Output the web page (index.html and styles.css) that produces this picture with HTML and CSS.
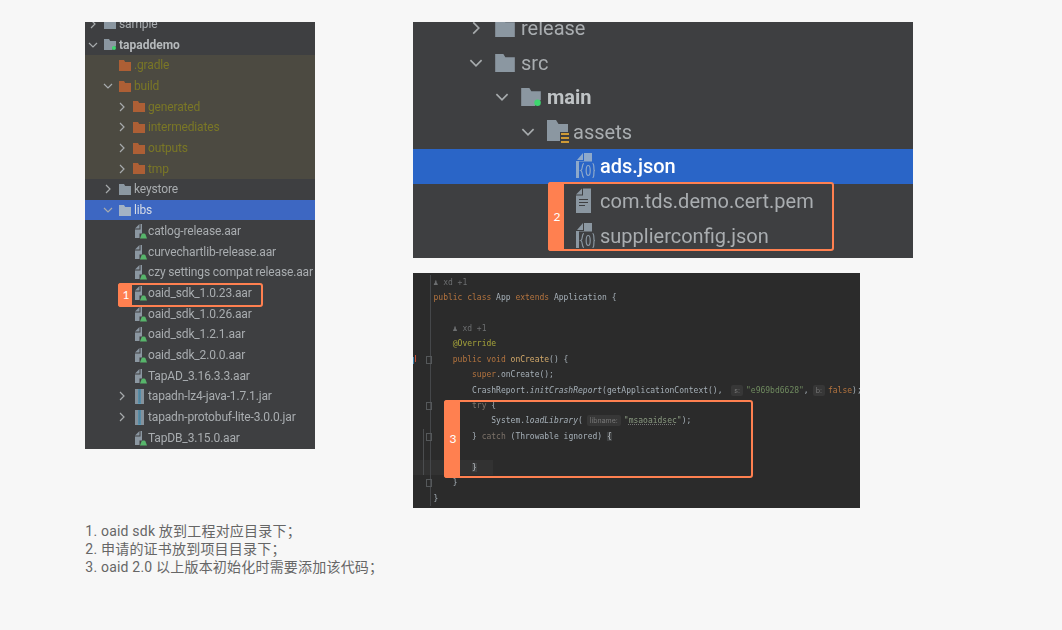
FILE: index.html
```html
<!DOCTYPE html>
<html lang="zh">
<head>
<meta charset="utf-8">
<title>oaid sdk</title>
<link rel="stylesheet" href="styles.css">
</head>
<body>
<svg class="defs" width="0" height="0" aria-hidden="true">
  <symbol id="chev-r" viewBox="0 0 10 10"><path d="M3 1l4 4-4 4" fill="none" stroke="currentColor" stroke-width="1.2"/></symbol>
  <symbol id="chev-d" viewBox="0 0 10 10"><path d="M1 3l4 4 4-4" fill="none" stroke="currentColor" stroke-width="1.2"/></symbol>
  <symbol id="folder" viewBox="0 0 12 11"><path d="M0 0h5l1.2 2H12v9H0z" fill="currentColor"/></symbol>
  <symbol id="module" viewBox="0 0 12 11"><path d="M0 0h5l1.2 2H12v5.5a3 3 0 0 0-3.5 3.5H0z" fill="#8b97a1"/><circle cx="10" cy="9" r="2" fill="#3ed66e"/></symbol>
  <symbol id="assets" viewBox="0 0 22 24"><path d="M0 0h9l2.5 4H21v8H13v9H0z" fill="#8b97a1"/><path d="M14 13h8v2h-8zM14 17h8v2h-8zM14 21h8v2h-8z" fill="#cf9a35"/></symbol>
  <symbol id="aar" viewBox="0 0 12 16"><path d="M0 5.500L4.500 1v4.500z" fill="#8b97a1"/><path d="M0 6.500h5.500V1H7v9.500H4.500V15H0z" fill="#8b97a1"/><path d="M5 15.500l1.500-4 1-1h2l1 1 1.500 4z" fill="#57b56b"/></symbol>
  <symbol id="jar" viewBox="0 0 9 15"><path d="M0 0h9v15H0z" fill="#85929c"/><path d="M3 0h3v15H3z" fill="#5b9ab8"/><path d="M3.500 1h2M3.500 3h2M3.500 5h2M3.500 7h2M3.500 9h2M3.500 11h2M3.500 13h2" stroke="#3e3f41" stroke-width=".5"/></symbol>
  <symbol id="json" viewBox="0 0 19 26"><path d="M1 7l6-7v7z" fill="currentColor"/><path d="M0 8h8V0h8v8.500H3v16.500H0z" fill="currentColor"/><path d="M8 10.500c-2.500 0-.8 6-3.200 7 2.400 1 .7 7 3.200 7M16.500 10.500c2.200 0 .8 6 1.800 7-1 1 .4 7-1.800 7" fill="none" stroke="currentColor" stroke-width="1.200"/><ellipse cx="12.200" cy="17.500" rx="2" ry="5" fill="none" stroke="currentColor" stroke-width="1.200"/></symbol>
  <symbol id="doc" viewBox="0 0 15 25"><path d="M0 6.500L6 .5v6z" fill="#8b97a1"/><path d="M0 7.500h7V.5h8V25H0z" fill="#8b97a1"/><path d="M3 11.500h9M3 14.500h9M3 17.500h6" stroke="#3e3f41" stroke-width="1.200"/></symbol>
</svg>

<main class="page">
  <div class="shots">
    <section class="shot tree-small">
      <div class="rows">
        <div class="row"><svg class="chev"><use href="#chev-r"/></svg><svg class="ico"><use href="#folder"/></svg><span>sample</span></div>
        <div class="row bold"><svg class="chev"><use href="#chev-d"/></svg><svg class="ico"><use href="#module"/></svg><span>tapaddemo</span></div>
        <div class="excluded">
          <div class="row l1"><i class="chev"></i><svg class="ico"><use href="#folder"/></svg><span>.gradle</span></div>
          <div class="row l1"><svg class="chev"><use href="#chev-d"/></svg><svg class="ico"><use href="#folder"/></svg><span>build</span></div>
          <div class="row l2"><svg class="chev"><use href="#chev-r"/></svg><svg class="ico"><use href="#folder"/></svg><span>generated</span></div>
          <div class="row l2"><svg class="chev"><use href="#chev-r"/></svg><svg class="ico"><use href="#folder"/></svg><span>intermediates</span></div>
          <div class="row l2"><svg class="chev"><use href="#chev-r"/></svg><svg class="ico"><use href="#folder"/></svg><span>outputs</span></div>
          <div class="row l2"><svg class="chev"><use href="#chev-r"/></svg><svg class="ico"><use href="#folder"/></svg><span>tmp</span></div>
        </div>
        <div class="row l1"><svg class="chev"><use href="#chev-r"/></svg><svg class="ico"><use href="#folder"/></svg><span>keystore</span></div>
        <div class="row l1 selected"><svg class="chev"><use href="#chev-d"/></svg><svg class="ico"><use href="#folder"/></svg><span>libs</span></div>
        <div class="row l2"><i class="chev"></i><svg class="ico aar"><use href="#aar"/></svg><span>catlog-release.aar</span></div>
        <div class="row l2"><i class="chev"></i><svg class="ico aar"><use href="#aar"/></svg><span>curvechartlib-release.aar</span></div>
        <div class="row l2"><i class="chev"></i><svg class="ico aar"><use href="#aar"/></svg><span>czy settings compat release.aar</span></div>
        <div class="row l2"><i class="chev"></i><svg class="ico aar"><use href="#aar"/></svg><span>oaid_sdk_1.0.23.aar</span></div>
        <div class="row l2"><i class="chev"></i><svg class="ico aar"><use href="#aar"/></svg><span>oaid_sdk_1.0.26.aar</span></div>
        <div class="row l2"><i class="chev"></i><svg class="ico aar"><use href="#aar"/></svg><span>oaid_sdk_1.2.1.aar</span></div>
        <div class="row l2"><i class="chev"></i><svg class="ico aar"><use href="#aar"/></svg><span>oaid_sdk_2.0.0.aar</span></div>
        <div class="row l2"><i class="chev"></i><svg class="ico aar"><use href="#aar"/></svg><span>TapAD_3.16.3.3.aar</span></div>
        <div class="row l2"><svg class="chev"><use href="#chev-r"/></svg><svg class="ico jar"><use href="#jar"/></svg><span>tapadn-lz4-java-1.7.1.jar</span></div>
        <div class="row l2"><svg class="chev"><use href="#chev-r"/></svg><svg class="ico jar"><use href="#jar"/></svg><span>tapadn-protobuf-lite-3.0.0.jar</span></div>
        <div class="row l2"><i class="chev"></i><svg class="ico aar"><use href="#aar"/></svg><span>TapDB_3.15.0.aar</span></div>
      </div>
      <div class="callout c1"><b>1</b></div>
    </section>

    <div class="right">
      <section class="shot tree-large">
        <div class="rows">
          <div class="row"><svg class="chev"><use href="#chev-r"/></svg><svg class="ico"><use href="#folder"/></svg><span>release</span></div>
          <div class="row"><svg class="chev"><use href="#chev-d"/></svg><svg class="ico"><use href="#folder"/></svg><span>src</span></div>
          <div class="row l1 bold"><svg class="chev"><use href="#chev-d"/></svg><svg class="ico"><use href="#module"/></svg><span>main</span></div>
          <div class="row l2"><svg class="chev"><use href="#chev-d"/></svg><svg class="ico tall"><use href="#assets"/></svg><span>assets</span></div>
          <div class="row l3 selected"><i class="chev"></i><svg class="ico file"><use href="#json"/></svg><span>ads.json</span></div>
          <div class="row l3"><i class="chev"></i><svg class="ico file doc"><use href="#doc"/></svg><span>com.tds.demo.cert.pem</span></div>
          <div class="row l3"><i class="chev"></i><svg class="ico file"><use href="#json"/></svg><span>supplierconfig.json</span></div>
        </div>
        <div class="callout c2"><b>2</b></div>
      </section>

      <section class="shot code">
        <div class="lines">
          <div class="ln"><i class="gut"></i><code class="hint">♟ xd +1</code></div>
          <div class="ln"><i class="gut"></i><code><em>public class</em> App <em>extends</em> Application {</code></div>
          <div class="ln"><i class="gut"></i><code></code></div>
          <div class="ln"><i class="gut"></i><code class="hint">    ♟ xd +1</code></div>
          <div class="ln"><i class="gut"></i><code>    <u>@Override</u></code></div>
          <div class="ln"><i class="gut"><s></s><q></q></i><code>    <em>public void</em> <strong>onCreate</strong>() {</code></div>
          <div class="ln"><i class="gut"></i><code>        <em>super</em>.onCreate();</code></div>
          <div class="ln"><i class="gut"></i><code>        CrashReport.<dfn>initCrashReport</dfn>(getApplicationContext(), <small>s:</small><ins>"e969bd6628"</ins>,<small>b:</small><em>false</em>);</code></div>
          <div class="ln"><i class="gut"><q></q></i><code>        <em class="dim">try</em> {</code></div>
          <div class="ln"><i class="gut"></i><code>            System.<dfn>loadLibrary</dfn>(<small>libname:</small><ins class="grey">"<span class="wavy">msaoaidsec</span>"</ins>);</code></div>
          <div class="ln"><i class="gut change"><q></q></i><code>        } <em class="dim">catch</em> (Throwable ignored) <mark>{</mark></code></div>
          <div class="ln"><i class="gut change"></i><code></code></div>
          <div class="ln current"><i class="gut change"></i><code>        <mark>}</mark></code></div>
          <div class="ln"><i class="gut"><q></q></i><code>    }</code></div>
          <div class="ln"><i class="gut"></i><code>}</code></div>
        </div>
        <div class="callout c3"><b>3</b></div>
      </section>
    </div>
  </div>

  <ol class="notes">
    <li>oaid sdk 放到工程对应目录下<span class="semi">；</span></li>
    <li>申请的证书放到项目目录下<span class="semi">；</span></li>
    <li>oaid 2.0 以上版本初始化时需要添加该代码<span class="semi">；</span></li>
  </ol>
</main>
</body>
</html>
```

FILE: styles.css
```css
* { box-sizing: border-box; }
html, body { margin: 0; height: 100%; }
body {
  background: #f7f7f7;
  overflow: hidden;
}
.defs { position: absolute; }
.page { padding: 22px 0 0 85px; }
.shots { display: flex; align-items: flex-start; gap: 98px; }
.right { display: flex; flex-direction: column; gap: 15px; }
.shot { position: relative; overflow: hidden; background: #3e3f41; }

.rows { filter: blur(0.45px); font-family: "Roboto", "Liberation Sans", sans-serif; color: #a9adb0; }
.row { display: flex; align-items: center; white-space: nowrap; }
.row .chev { flex: none; display: block; color: #a7abad; }
.row .ico { flex: none; color: #8b97a1; }

/* small project tree */
.tree-small { width: 230px; height: 427px; }
.tree-small .rows { margin-top: -8.4px; font-size: 12px; letter-spacing: -0.15px; }
.tree-small .row { height: 20.7px; }
.tree-small .chev { width: 10px; height: 10px; margin: 0 3px; }
.tree-small .ico { width: 12px; height: 11px; margin: 0 3px; }
.tree-small .ico.aar { width: 12px; height: 16px; margin: 0 1px 0 5px; }
.tree-small .ico.jar { width: 9px; height: 15px; margin: 0 4px 0 5px; }
.tree-small .l1 { padding-left: 15px; }
.tree-small .l2 { padding-left: 29px; }
.tree-small .bold { font-weight: 700; color: #b6babc; letter-spacing: 0; }
.tree-small .excluded { background: #4c4a41; color: #7a7726; }
.tree-small .excluded .ico { color: #ad5f35; }
.tree-small .selected { background: #3d67c2; color: #d5dbe6; }
.tree-small .selected .ico { color: #a3b2c4; }

/* large project tree */
.tree-large { width: 500px; height: 236px; }
.tree-large .rows { margin-top: -11.3px; font-size: 20px; }
.tree-large .row { height: 34.6px; padding-left: 50px; }
.tree-large .chev { width: 14px; height: 14px; margin: 0 6px; }
.tree-large .ico { width: 20px; height: 18px; margin: 0 6px; }
.tree-large .ico.tall { width: 22px; height: 24px; margin: 0 4px 0 6px; }
.tree-large .ico.file { width: 19px; height: 26px; margin: 0 5px 0 9px; }
.tree-large .ico.file.doc { width: 15px; height: 25px; margin: 0 9px 0 9px; }
.tree-large .l1 { padding-left: 76px; }
.tree-large .l2 { padding-left: 102px; }
.tree-large .l3 { padding-left: 128px; }
.tree-large .bold { font-weight: 700; color: #bfc3c5; }
.tree-large .selected { background: #2a65c7; color: #fff; font-weight: 500; }
.tree-large .selected .ico { color: #8ea9cb; }

/* code screenshot */
.code { width: 447px; height: 235px; background: #2b2b2b; }
.lines {
  padding-top: 1.5px;
  filter: blur(0.45px);
  font-family: "DejaVu Sans Mono", "Liberation Mono", monospace;
  font-size: 8px;
  color: #a6b0b8;
}
.ln { display: flex; height: 15.45px; line-height: 15.45px; white-space: pre; }
.gut {
  flex: none;
  position: relative;
  width: 18px;
  border-right: 1px solid #45474a;
  margin-right: 2.5px;
}
.gut q {
  position: absolute;
  left: 13px;
  top: 4px;
  width: 6px;
  height: 8px;
  border: 1px solid #55585a;
  quotes: none;
}
.gut s {
  position: absolute;
  left: 2px;
  top: 3px;
  width: 1px;
  height: 7px;
  background: #c4533b;
  box-shadow: -2px 2px 0 #3f7fa8;
}
.gut.change { background: linear-gradient(#4b4d4f, #4b4d4f) 10px 0 / 1px 100% no-repeat; }
.current { background: linear-gradient(#323232, #323232) 0 0 / 80px 100% no-repeat; }
.ln code { font: inherit; }
.ln em { font-style: normal; color: #b4743f; }
.ln em.dim { color: #7d736a; }
.ln u { text-decoration: none; color: #a5a33a; }
.ln strong { font-weight: 400; color: #d3a96a; }
.ln dfn { font-style: italic; }
.ln ins { text-decoration: none; color: #6f8a5f; }
.ln ins.grey { color: #8a9a80; }
.ln mark { background: #3f4142; color: #b9bec2; }
.ln small {
  display: inline-block;
  margin: 0 3px 0 4px;
  padding: 0 3px;
  border-radius: 2px;
  background: #373737;
  color: #777;
  font-family: "Inter", "Liberation Sans", sans-serif;
  font-size: 7px;
  line-height: 11px;
}
.wavy { text-decoration: underline dotted #777; }
.hint { color: #6c6e70; font-size: 7.5px; }

/* numbered callouts */
.callout {
  position: absolute;
  border: 2px solid #ff8050;
  border-radius: 3px;
  display: flex;
}
.callout b {
  flex: none;
  width: 14px;
  margin: -2px 0 -2px -2px;
  padding-left: 2px;
  background: #ff8050;
  border-radius: 3px 0 0 3px;
  color: #fff;
  font: 400 12px/1 "Lato", "Liberation Sans", sans-serif;
  display: flex;
  align-items: center;
  justify-content: center;
}
.c1 { left: 33px; top: 261px; width: 145px; height: 24px; }
.c2 { left: 135px; top: 160px; width: 286px; height: 69px; }
.c3 { left: 31px; top: 127px; width: 309px; height: 78px; }
.c2 b, .c3 b { width: 16px; }

/* notes */
.notes {
  margin: 14px 0 0;
  padding: 0 0 0 16px;
  font-family: "Roboto", "Noto Sans CJK SC", sans-serif;
  font-size: 14px;
  line-height: 18px;
  letter-spacing: 0.2px;
  color: #666;
}
.semi { font-family: "Noto Sans CJK TC", sans-serif; line-height: 1; }
```
